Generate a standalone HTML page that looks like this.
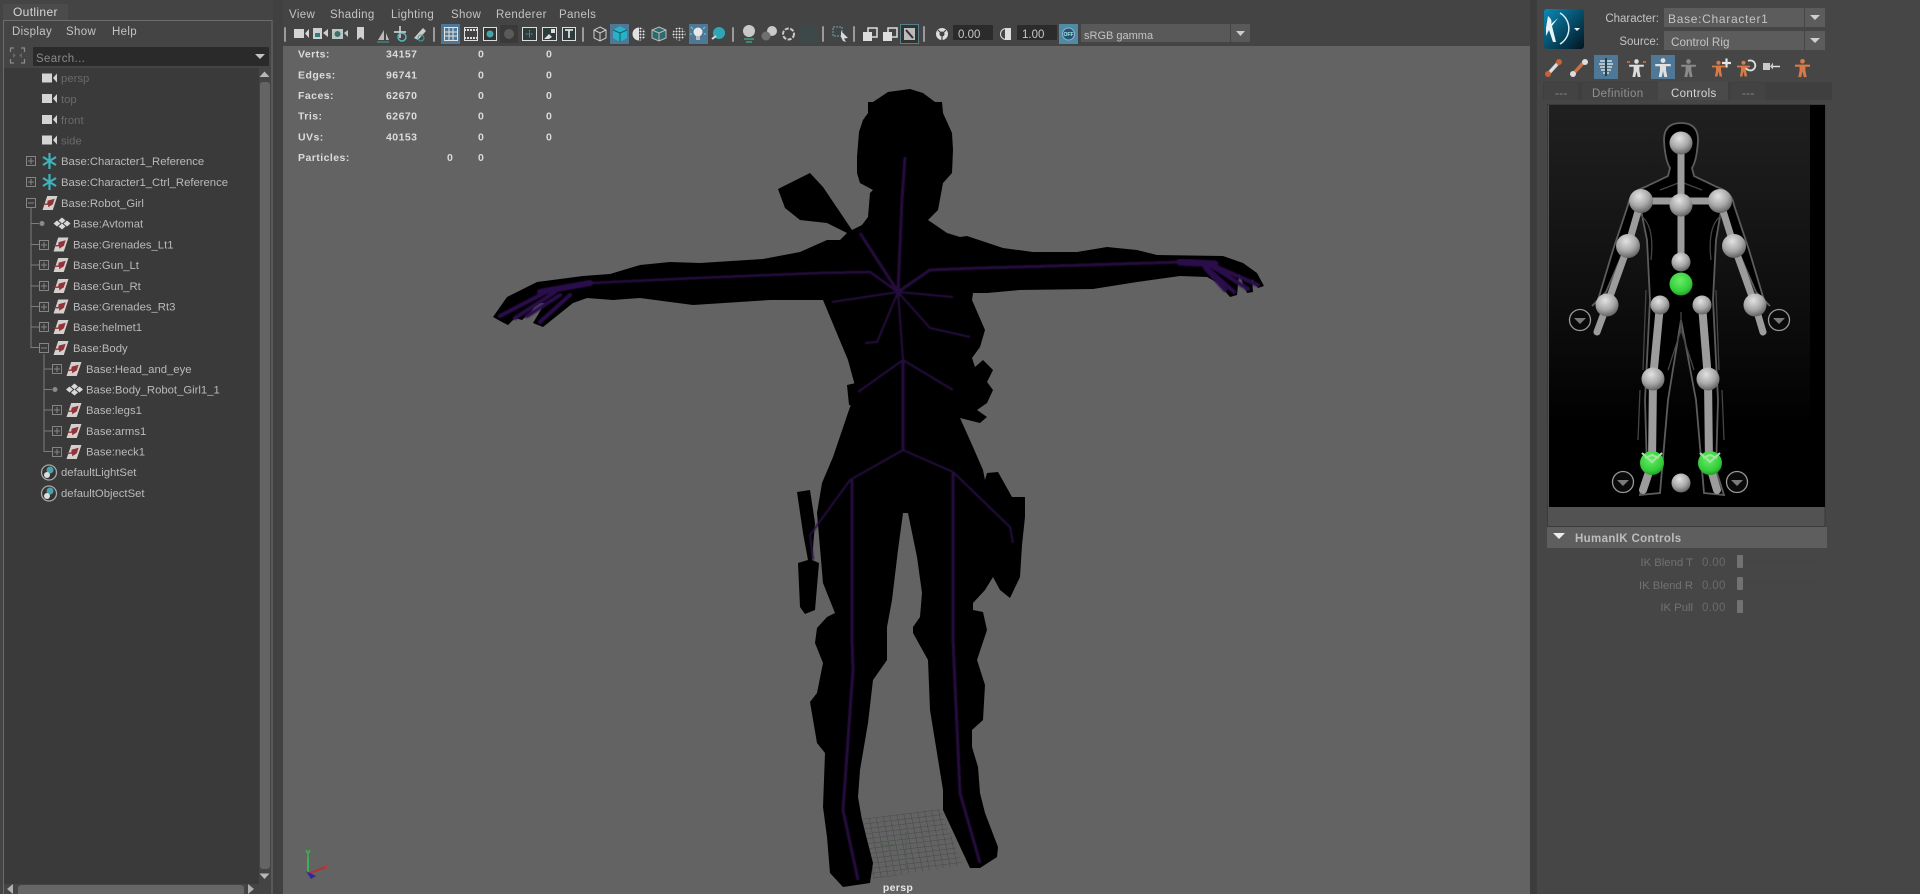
<!DOCTYPE html>
<html><head><meta charset="utf-8"><style>
html,body{margin:0;padding:0;background:#464646;width:1920px;height:894px;overflow:hidden}
svg{display:block;position:absolute;left:0;top:0;filter:blur(.35px)}
text{font-family:"Liberation Sans",sans-serif;font-size:11.5px;fill:#c4c4c4;letter-spacing:.35px}
.d{fill:#6a6a6a;font-size:11.3px;letter-spacing:0}
.s{font-weight:bold;font-size:10.5px;fill:#dcdcdc;letter-spacing:.45px}
.t{fill:#bababa;font-size:11.3px;letter-spacing:0}
</style></head><body>
<svg width="1920" height="894" viewBox="0 0 1920 894" xmlns="http://www.w3.org/2000/svg">
<defs>
<linearGradient id="pg" x1="0" y1="0" x2="0" y2="1"><stop offset="0" stop-color="#202020"/><stop offset=".6" stop-color="#0a0a0a"/><stop offset=".8" stop-color="#000"/><stop offset="1" stop-color="#000"/></linearGradient>
<linearGradient id="lg" x1="0" y1="0" x2="1" y2="1"><stop offset="0" stop-color="#0a8ab8"/><stop offset="1" stop-color="#02141f"/></linearGradient>
<radialGradient id="ball" cx=".42" cy=".3" r=".75"><stop offset="0" stop-color="#e2e2e2"/><stop offset=".55" stop-color="#a8a8a8"/><stop offset="1" stop-color="#585858"/></radialGradient>
<radialGradient id="gball" cx=".45" cy=".35" r=".7"><stop offset="0" stop-color="#66ee66"/><stop offset=".7" stop-color="#34cc3a"/><stop offset="1" stop-color="#1f8f26"/></radialGradient>
<pattern id="grid" width="7" height="5" patternUnits="userSpaceOnUse" patternTransform="matrix(.99 -.12 .2 .98 862 819)"><path d="M0 0H7M0 0V5" stroke="#474747" stroke-width="1" fill="none"/></pattern>
<pattern id="dots" width="3" height="3" patternUnits="userSpaceOnUse"><rect width="3" height="3" fill="#3a3a3a"/><circle cx="1.500" cy="1.500" r="1.050" fill="#e8e8e8"/></pattern>
<filter id="sb" x="-5%" y="-5%" width="110%" height="110%"><feGaussianBlur stdDeviation=".7"/></filter>
<symbol id="mesh" viewBox="0 0 16 15" overflow="visible"><path d="M5 0H16L11 15H0Z" fill="#d4d0ce"/><path d="M-1 8H5L5.500 5L13 3L11 9L6 12V9.500H2Z" fill="#933238"/></symbol>
<symbol id="xf" viewBox="0 0 17 12" overflow="visible"><path d="M8.500 0L12 3L8.500 6L5 3ZM3.500 3L7 6L3.500 9L0 6ZM13.500 3L17 6L13.500 9L10 6ZM8.500 6L12 9L8.500 12L5 9Z" fill="#d8d8d8"/></symbol>
<symbol id="cam" viewBox="0 0 15 9" overflow="visible"><path d="M0 0H10V9H0ZM11 4.500L15 0V9Z" fill="#d4d4d4"/></symbol>
<symbol id="man" viewBox="0 0 18 22" overflow="visible"><circle cx="9" cy="3" r="2.800"/><path d="M0 7H18V9.500H12.500V14L14 22H10.500L9 15L7.500 22H4L5.500 14V9.500H0Z"/></symbol>
</defs>

<!-- base -->
<rect width="1920" height="894" fill="#464646"/>
<rect x="0" y="0" width="1537" height="894" fill="#444"/>
<rect x="273" y="0" width="10" height="894" fill="#414141"/>
<rect x="283" y="46" width="1247" height="848" fill="#636363"/>
<rect x="1530" y="0" width="7" height="894" fill="#3c3c3c"/>

<!-- Outliner -->
<path d="M3 20V4H68V20Z" fill="#4b4b4b"/>
<text x="13" y="16" style="fill:#d6d6d6;font-size:12px">Outliner</text>
<rect x="3.500" y="20.500" width="268.500" height="880" fill="#444" stroke="#6c6c6c"/>
<text x="12" y="35">Display</text><text x="66" y="35">Show</text><text x="112" y="35">Help</text>
<path d="M10 48h4M21 48h4M10 63h4M21 63h4M10.500 48v4M10.500 59v4M24.500 48v4M24.500 59v4" stroke="#8a8a8a" fill="none" stroke-width="1.300"/>
<path d="M13 53l3 2.500-3 2.500ZM22 53l-3 2.500 3 2.500Z" fill="#666"/>
<rect x="33" y="47" width="236" height="19" rx="1" fill="#2a2a2a"/>
<text x="36" y="62" style="fill:#8a8a8a">Search...</text>
<path d="M255 54H265L260 59Z" fill="#c4c4c4"/>
<rect x="4" y="68" width="255" height="816" fill="#3a3a3a"/>
<rect x="259" y="68" width="12" height="816" fill="#444"/>
<rect x="260" y="82" width="10" height="787" rx="3" fill="#646464"/>
<path d="M259.500 77L264.500 71.500L269.500 77Z" fill="#b8b8b8"/>
<path d="M259.500 873.500H269.500L264.500 879Z" fill="#b8b8b8"/>
<path d="M7 889L13 884V894Z" fill="#b0b0b0"/><path d="M248 884L254 889L248 894Z" fill="#b0b0b0"/>
<path d="M18 894V888Q18 885 22 885H240Q244 885 244 888V894Z" fill="#666"/>

<!-- tree lines -->
<path d="M31 208V347.500H39M31 223.500H39M31 244.500H39M31 265H39M31 286H39M31 306.500H39M31 327H39M44 354V451.500H52M44 369H52M44 389.500H52M44 410H52M44 431H52" stroke="#7c7c7c" fill="none"/>
<g fill="none" stroke="#858585">
<rect x="26.500" y="156.500" width="9" height="9"/><rect x="26.500" y="177.500" width="9" height="9"/><rect x="26.500" y="198.500" width="9" height="9"/>
<rect x="39.500" y="240.500" width="9" height="9" fill="#3a3a3a"/><rect x="39.500" y="260.500" width="9" height="9" fill="#3a3a3a"/><rect x="39.500" y="281.500" width="9" height="9" fill="#3a3a3a"/><rect x="39.500" y="302.500" width="9" height="9" fill="#3a3a3a"/><rect x="39.500" y="322.500" width="9" height="9" fill="#3a3a3a"/><rect x="39.500" y="343.500" width="9" height="9" fill="#3a3a3a"/>
<rect x="52.500" y="364.500" width="9" height="9" fill="#3a3a3a"/><rect x="52.500" y="405.500" width="9" height="9" fill="#3a3a3a"/><rect x="52.500" y="426.500" width="9" height="9" fill="#3a3a3a"/><rect x="52.500" y="447.500" width="9" height="9" fill="#3a3a3a"/>
<path d="M28 161h6M31 158v6M28 182h6M31 179v6M28 203h6M41 245h6M44 242v6M41 265h6M44 262v6M41 286h6M44 283v6M41 307h6M44 304v6M41 327h6M44 324v6M41 348h6M54 369h6M57 366v6M54 410h6M57 407v6M54 431h6M57 428v6M54 452h6M57 449v6"/>
</g>
<circle cx="42" cy="223.500" r="2.500" fill="#8a8a8a"/><circle cx="55" cy="389.500" r="2.500" fill="#8a8a8a"/>

<!-- tree icons -->
<use href="#cam" x="42" y="73.500" width="15" height="9"/><use href="#cam" x="42" y="94" width="15" height="9"/><use href="#cam" x="42" y="115" width="15" height="9"/><use href="#cam" x="42" y="135.500" width="15" height="9"/>
<g stroke="#3fb3bc" stroke-width="2.200" fill="none"><path d="M49.500 153V169M43 157L56 165M56 157L43 165M49.500 174V190M43 178L56 186M56 178L43 186"/></g>
<use href="#mesh" x="42" y="196" width="16" height="14"/>
<use href="#xf" x="53.500" y="217.500" width="17" height="12"/>
<use href="#mesh" x="53" y="237.500" width="16" height="14"/><use href="#mesh" x="53" y="258" width="16" height="14"/><use href="#mesh" x="53" y="279" width="16" height="14"/><use href="#mesh" x="53" y="299.500" width="16" height="14"/><use href="#mesh" x="53" y="320" width="16" height="14"/><use href="#mesh" x="53" y="341" width="16" height="14"/>
<use href="#mesh" x="66" y="362" width="16" height="14"/><use href="#xf" x="66" y="383.500" width="17" height="12"/><use href="#mesh" x="66" y="403" width="16" height="14"/><use href="#mesh" x="66" y="424" width="16" height="14"/><use href="#mesh" x="66" y="445" width="16" height="14"/>
<g><circle cx="49" cy="472.500" r="7.500" fill="#333" stroke="#a8a8a8" stroke-width="1.300"/><circle cx="50" cy="470" r="3.500" fill="#4aa3ac"/><circle cx="47" cy="475" r="3" fill="#ddd"/>
<circle cx="49" cy="493.500" r="7.500" fill="#333" stroke="#a8a8a8" stroke-width="1.300"/><circle cx="50" cy="491" r="3.500" fill="#4aa3ac"/><circle cx="47" cy="496" r="3" fill="#ddd"/></g>

<!-- tree text -->
<text x="61" y="82" class="d">persp</text><text x="61" y="103" class="d">top</text><text x="61" y="124" class="d">front</text><text x="61" y="144.500" class="d">side</text>
<g>
<text x="61" y="165" class="t">Base:Character1_Reference</text>
<text x="61" y="186" class="t">Base:Character1_Ctrl_Reference</text>
<text x="61" y="207" class="t">Base:Robot_Girl</text>
<text x="73" y="227.500" class="t">Base:Avtomat</text>
<text x="73" y="248.500" class="t">Base:Grenades_Lt1</text>
<text x="73" y="269" class="t">Base:Gun_Lt</text>
<text x="73" y="290" class="t">Base:Gun_Rt</text>
<text x="73" y="310.500" class="t">Base:Grenades_Rt3</text>
<text x="73" y="331" class="t">Base:helmet1</text>
<text x="73" y="352" class="t">Base:Body</text>
<text x="86" y="373" class="t">Base:Head_and_eye</text>
<text x="86" y="393.500" class="t">Base:Body_Robot_Girl1_1</text>
<text x="86" y="414" class="t">Base:legs1</text>
<text x="86" y="435" class="t">Base:arms1</text>
<text x="86" y="455.500" class="t">Base:neck1</text>
<text x="61" y="476" class="t">defaultLightSet</text>
<text x="61" y="497" class="t">defaultObjectSet</text>
</g>

<!-- Viewport menus -->
<text x="289" y="18">View</text><text x="330" y="18">Shading</text><text x="391" y="18">Lighting</text><text x="451" y="18">Show</text><text x="496" y="18">Renderer</text><text x="559" y="18">Panels</text>

<!-- Toolbar -->
<g stroke="#9a9a9a" stroke-width="2" stroke-linecap="round"><path d="M285 28V41M434 28V41M583 28V41M733 28V41M823 27V41M854 27V41M924 27V41"/></g>
<rect x="441" y="24" width="19" height="20" fill="#4f7896"/><rect x="610" y="24" width="19" height="20" fill="#4f7896"/><rect x="689" y="24" width="19" height="20" fill="#4f7896"/>
<rect x="500" y="25" width="18" height="18" fill="#3a3a3a"/>
<use href="#cam" x="294" y="29" width="15" height="9"/>
<path d="M313 28h9v11h-9zM323 33l5-4v8z" fill="#cfcfcf"/><rect x="315" y="33" width="5" height="4" fill="#2f7d7d"/>
<path d="M332 29h11v10h-11zM344 33l4-3v7z" fill="#b9c7c7"/><circle cx="337.500" cy="34" r="3" fill="#3f6e6e"/>
<path d="M357 27h7v13l-3.500-3-3.500 3z" fill="#d0d0d0"/>
<path d="M378 40L384 30V40ZM386 40V33L389 40Z" fill="#bbb"/><path d="M377 42h12" stroke="#3fa0a0"/>
<path d="M394 32h12M400 26v12" stroke="#ddd" stroke-width="1.500"/><circle cx="402" cy="37" r="4" fill="none" stroke="#58b7bb" stroke-width="1.500"/>
<path d="M414 38L423 28L426 31L418 40Z" fill="#ccc"/><circle cx="421" cy="38" r="3" fill="none" stroke="#3fa0a0"/>
<g fill="none" stroke="#e4e4e4"><rect x="444.500" y="27.500" width="13" height="13"/><path d="M444 32h14M444 36h14M449 27v14M453 27v14"/></g>
<rect x="464.500" y="27.500" width="13" height="13" fill="none" stroke="#ddd"/><path d="M464 30h14M464 38h14" stroke="#ddd" stroke-dasharray="2 1" stroke-width="2"/>
<rect x="483.500" y="27.500" width="13" height="13" fill="#333" stroke="#ddd"/><circle cx="490" cy="34" r="3.500" fill="#3fa7a7"/>
<circle cx="509" cy="34" r="5" fill="#5a5a5a"/>
<rect x="522.500" y="27.500" width="14" height="13" fill="#2e3b3b" stroke="#ddd"/><path d="M526 34h7M529.500 30v8" stroke="#5ab" stroke-dasharray="1.500 1"/>
<rect x="542.500" y="27.500" width="14" height="13" fill="#2e3b3b" stroke="#ddd"/><path d="M544 39l5-5 3 3-3 2zM551 29h4v4h-4z" fill="#ddd"/>
<rect x="562.500" y="27.500" width="13" height="13" fill="#2e3b3b" stroke="#ddd"/><path d="M565 30h8M569 30v8" stroke="#ddd" stroke-width="1.800"/>
<g fill="none" stroke="#cfcfcf"><path d="M600 27L606 30V38L600 41L594 38V30ZM594 30L600 33L606 30M600 33V41"/></g>
<path d="M620 26L627 30V38L620 42L613 38V30Z" fill="#27b3c5"/><path d="M613 30L620 33L627 30M620 33V42" stroke="#0b5f6b" fill="none"/>
<circle cx="639" cy="34" r="6.500" fill="#e2e2e2"/><path d="M639 27.500a6.500 6.500 0 0 1 0 13z" fill="url(#dots)"/>
<path d="M659 27L666 30V38L659 41L652 38V30Z" fill="#2d6a6d" stroke="#bbb"/><path d="M652 30L659 33L666 30M659 33V41" stroke="#bbb" fill="none"/>
<circle cx="679" cy="34" r="6.500" fill="url(#dots)"/>
<circle cx="698" cy="32" r="4.500" fill="#e8e8e8"/><rect x="696" y="36" width="4" height="4" fill="#bbb"/><path d="M691 27l2 2M705 27l-2 2M690 34h2M704 34h2" stroke="#58c0d0" stroke-width="1.500"/>
<circle cx="719" cy="33" r="6" fill="#2fa6b5"/><path d="M712 39l4-3" stroke="#ddd" stroke-width="2"/>
<circle cx="749" cy="31" r="6" fill="#c9c9c9"/><path d="M744 39h10M746 42h6" stroke="#3f9f7f" stroke-width="1.500"/>
<circle cx="772" cy="31" r="5" fill="#c9c9c9"/><circle cx="766" cy="36" r="4.500" fill="#6f6f6f"/>
<circle cx="788.500" cy="34" r="5.500" fill="none" stroke="#c8c8c8" stroke-width="2" stroke-dasharray="4 1.500"/>
<rect x="800" y="25" width="17" height="18" fill="#3d4848"/>
<path d="M833 27h9v9h-9z" fill="none" stroke="#6aa" stroke-dasharray="2 1"/><path d="M841 31L848 38L844 38.500L846 42L843 41L841 37Z" fill="#d8d8d8"/>
<path d="M868 28h9v9h-9z" fill="none" stroke="#ddd" stroke-width="1.500"/><rect x="863" y="32" width="9" height="9" fill="#ddd"/>
<path d="M888 28h9v9h-9z" fill="none" stroke="#ddd" stroke-width="1.500"/><rect x="883" y="32" width="9" height="9" fill="#ddd"/>
<rect x="900.500" y="24.500" width="18" height="19" fill="#333" stroke="#55808a"/><rect x="904" y="28" width="11" height="12" fill="#bbb"/><path d="M906 30L913 38" stroke="#333" stroke-width="2"/>
<circle cx="942" cy="34" r="6" fill="#ddd"/><circle cx="942" cy="34" r="2.500" fill="#444"/><path d="M938 30l4 4M946 30l-4 4M942 40v-6" stroke="#444" stroke-width="1.200"/>
<rect x="953" y="25" width="40" height="15" rx="1" fill="#2b2b2b"/><text x="958" y="38" style="font-size:11.500px;fill:#c8c8c8;letter-spacing:0">0.00</text>
<path d="M1006 28.500a5.500 5.500 0 1 0 0 11z" fill="#444" stroke="#ddd"/><path d="M1005 28H1011V40H1005Z" fill="#ddd"/>
<rect x="1017" y="25" width="40" height="15" rx="1" fill="#2b2b2b"/><text x="1022" y="38" style="font-size:11.500px;fill:#c8c8c8;letter-spacing:0">1.00</text>
<rect x="1059" y="24" width="19" height="20" fill="#4f8ca4"/><circle cx="1068.500" cy="34" r="6" fill="#22586a" stroke="#9ad"/><text x="1063.500" y="36" style="font-size:5px;font-weight:bold;fill:#aee;letter-spacing:0">OFF</text>
<rect x="1081" y="24" width="149" height="18" fill="#595959"/><rect x="1231" y="24" width="19" height="18" fill="#595959"/>
<text x="1084" y="39" style="font-size:11px;letter-spacing:0">sRGB gamma</text>
<path d="M1236 31H1245L1240.500 36Z" fill="#ccc"/>

<!-- Stats -->
<g transform="translate(0 -.5)">
<text x="298" y="58" class="s">Verts:</text><text x="386" y="58" class="s">34157</text><text x="478" y="58" class="s">0</text><text x="546" y="58" class="s">0</text>
<text x="298" y="79" class="s">Edges:</text><text x="386" y="79" class="s">96741</text><text x="478" y="79" class="s">0</text><text x="546" y="79" class="s">0</text>
<text x="298" y="99.500" class="s">Faces:</text><text x="386" y="99.500" class="s">62670</text><text x="478" y="99.500" class="s">0</text><text x="546" y="99.500" class="s">0</text>
<text x="298" y="120" class="s">Tris:</text><text x="386" y="120" class="s">62670</text><text x="478" y="120" class="s">0</text><text x="546" y="120" class="s">0</text>
<text x="298" y="141" class="s">UVs:</text><text x="386" y="141" class="s">40153</text><text x="478" y="141" class="s">0</text><text x="546" y="141" class="s">0</text>
<text x="298" y="161.500" class="s">Particles:</text><text x="447" y="161.500" class="s">0</text><text x="478" y="161.500" class="s">0</text>
</g>

<!-- grid -->
<path d="M862 819L940 809L963 865L873 879Z" fill="url(#grid)"/>
<path d="M880 845h16M906 832V870" stroke="#4d5f4d"/>

<!-- silhouette -->
<path fill="#000" d="M868 102L873 102L888 92L910 89L923 93L935 102L942 102L943 113L952 133L953 150L952 173L943 183L938 210L928 220L947 233L960 237L967 236L1003 248L1033 252L1077 252L1107 247L1137 250L1157 255L1223 256L1243 263L1257 273L1264 286L1258 288L1252 279L1253 292L1247 293L1239 274L1237 295L1230 297L1218 283L1207 277L1180 276L1137 282L1093 289L1020 290L987 293L973 293L972 300L985 330L980 347L972 358L975 367L983 360L993 370L987 382L993 390L987 403L977 410L987 417L980 423L960 418L973 447L983 470L985 480L987 473L998 472L1012 497L1025 497L1025 517L1022 545L1020 577L1010 598L1000 590L993 577L985 590L973 603L973 610L983 612L987 630L977 660L985 685L983 720L972 730L972 747L978 767L980 793L985 813L998 847L997 857L980 868L970 868L943 810L943 790L930 710L928 660L913 633L913 627L920 617L922 593L917 557L908 513L903 513L898 550L892 600L887 627L887 660L873 680L868 723L860 770L858 797L862 820L873 863L870 883L843 887L830 873L827 837L823 807L825 753L817 743L810 702L817 693L823 663L815 643L817 628L827 617L835 613L823 583L817 513L822 483L833 457L850 407L857 393L848 360L823 300L770 300L693 305L640 298L613 300L587 298L573 303L543 327L533 323L545 303L537 303L530 313L522 320L515 318L508 325L502 322L493 317L507 297L537 282L583 276L610 274L640 265L670 262L700 263L763 259L800 252L827 240L840 240L847 233L827 223L800 220L785 208L778 189L810 173L823 187L852 230L862 225L868 217L870 193L873 190L860 183L857 173L857 157L859 132L863 120L868 113Z"/>
<path fill="#000" d="M797 492L810 490L815 523L812 560L819 563L815 610L805 614L800 607L798 563L808 560L803 533Z"/>
<path fill="#000" d="M847 385L856 383L858 400L855 406L849 405Z"/>

<!-- skeleton -->
<g fill="none" stroke="#25103f" stroke-width="2" filter="url(#sb)">
<path stroke-width="3" d="M898 292L902 200L905 157"/>
<path stroke-width="2.500" d="M590 283L697 278L820 273L870 272L898 292"/>
<path stroke-width="3" d="M898 292L860 233M898 292L930 270L980 268L1087 265L1180 262"/>
<path d="M898 292L832 302M898 292L953 297M898 292L903 360M898 292L877 342L865 343M898 292L930 328L970 337"/>
<path stroke-width="3" d="M903 360V450"/>
<path d="M903 360L858 392M903 360L953 390"/>
<path d="M903 450L850 480L810 535L813 560M903 450L953 472L1010 527L1013 543"/>
<path stroke-width="3" d="M852 480V640L853 670L843 810L858 880M953 473V640L960 793L980 863"/>
</g>
<g fill="none" stroke="#2a0f4c" stroke-width="4" stroke-linecap="round" filter="url(#sb)">
<path stroke-width="6" d="M590 283L540 292"/>
<path d="M550 290L500 316M555 292L515 318M560 295L527 316M570 295L540 322"/>
<path stroke-width="7" d="M1180 262L1215 264"/>
<path d="M1210 264L1258 285M1210 265L1248 289M1205 266L1234 292M1205 268L1225 290"/>
</g>

<!-- axis + cam label -->
<path d="M308 873V857" stroke="#3fae55" stroke-width="2"/>
<path d="M306 850l2 4 2-4M308 854v4" stroke="#3fae55" fill="none" stroke-width="1.500"/>
<path d="M310 873L326 867" stroke="#a8383c" stroke-width="2.500"/><path d="M323 866l5-2-1 5z" fill="#b53c40"/>
<path d="M306 871L316 876L311 879Z" fill="#2a2a9a"/>
<text x="898" y="891" text-anchor="middle" style="font-weight:bold;font-size:10.500px;fill:#e6e6e6">persp</text>

<!-- Right panel -->
<rect x="1544" y="9" width="40" height="40" rx="3" fill="url(#lg)"/>
<path d="M1548 16Q1553 20 1551 24L1558 18L1552 26L1556 42H1553L1549 30L1546 36V28Z" fill="#e8f4f8"/>
<path d="M1552 13A18 18 0 0 1 1552 44" stroke="#d8eef5" stroke-width="1.500" fill="none" transform="translate(8 0)"/>
<path d="M1574 28H1580L1577 31Z" fill="#e8f4f8"/>
<text x="1659" y="22" text-anchor="end" style="font-size:11.500px;letter-spacing:0">Character:</text>
<text x="1659" y="45" text-anchor="end" style="font-size:11.500px;letter-spacing:0">Source:</text>
<rect x="1664" y="8" width="140" height="19" fill="#5c5c5c"/><rect x="1805" y="8" width="20" height="19" fill="#5c5c5c"/>
<rect x="1664" y="31" width="140" height="19" fill="#5c5c5c"/><rect x="1805" y="31" width="20" height="19" fill="#5c5c5c"/>
<text x="1668" y="23" style="font-size:12px;letter-spacing:.7px">Base:Character1</text>
<text x="1671" y="46" style="font-size:11.700px;letter-spacing:0">Control Rig</text>
<path d="M1810 15H1820L1815 20ZM1810 38H1820L1815 43Z" fill="#cfcfcf"/>

<rect x="1594" y="55" width="24" height="24" fill="#4f7896"/><rect x="1651" y="55" width="24" height="24" fill="#4f7896"/>
<path d="M1549 73L1559 62" stroke="#ddd" stroke-width="3.500"/><circle cx="1548" cy="74" r="3" fill="#c8603a"/><circle cx="1559" cy="62" r="3" fill="#c8603a"/>
<path d="M1574 73L1584 62" stroke="#c8704a" stroke-width="3.500"/><circle cx="1573" cy="74" r="3" fill="#ddd"/><circle cx="1585" cy="62" r="3" fill="#ddd"/>
<g stroke="#d8d8d8" stroke-width="1.500"><path d="M1600 61h12M1599 64h14M1600 67h12M1601 70h10M1603 73h6"/></g><path d="M1606 58V76" stroke="#1f4050" stroke-width="2"/>
<use href="#man" x="1629" y="59" width="15" height="18" fill="#dcdcdc"/>
<path d="M1627 62h3M1643 62h3" stroke="#c8603a" stroke-width="2"/>
<use href="#man" x="1655" y="58" width="16" height="19" fill="#e0e0e0"/>
<use href="#man" x="1681" y="59" width="15" height="18" fill="#8a8a8a"/>
<use href="#man" x="1712" y="60" width="13" height="17" fill="#d87a45"/><path d="M1722 63h9M1726.500 58.500v9" stroke="#e4e4e4" stroke-width="2.200"/>
<use href="#man" x="1737" y="60" width="13" height="17" fill="#d87a45"/><path d="M1748 61a5 5 0 1 1-2 7" fill="none" stroke="#ddd" stroke-width="1.800"/>
<path d="M1763 63h7v7h-7zM1770 66.500l3-4v7z" fill="#c8c8c8"/><path d="M1773 66.500h7" stroke="#ddd" stroke-width="1.500"/>
<use href="#man" x="1795" y="58" width="15" height="20" fill="#d87a45"/>

<rect x="1543" y="82" width="289" height="18" fill="#3f3f3f"/>
<rect x="1544" y="83" width="34" height="17" fill="#434343"/><rect x="1582" y="83" width="76" height="17" fill="#434343"/><rect x="1658" y="82" width="70" height="18" fill="#4a4a4a"/><rect x="1731" y="83" width="34" height="17" fill="#434343"/>
<text x="1555" y="97" style="fill:#8a8a8a">---</text><text x="1592" y="97" style="fill:#909090">Definition</text><text x="1671" y="97" style="fill:#d6d6d6">Controls</text><text x="1742" y="97" style="fill:#8a8a8a">---</text>

<rect x="1547.500" y="104.500" width="277.500" height="422" fill="#525252" stroke="#3a3a3a"/>
<rect x="1549" y="105" width="276" height="402" fill="url(#pg)"/>
<rect x="1810" y="105" width="15" height="402" fill="#000"/>
<!-- body figure -->
<path d="M1681 123Q1664 123 1664 140Q1665 160 1670 168L1668 176L1645 187Q1630 192 1628 205L1613 250L1598 300L1592 306L1606 292L1632 232L1640 205L1647 240L1650 300L1645 400L1647 470L1640 495L1660 493L1668 400L1681 320L1696 400L1704 493L1724 495L1716 470L1718 400L1713 300L1716 240L1722 205L1730 232L1756 292L1770 306L1764 300L1749 250L1734 205Q1732 192 1717 187L1694 176L1692 168Q1697 160 1698 140Q1698 123 1681 123Z" fill="#000" stroke="#5c5c5c" stroke-width="1.800"/>
<path d="M1640 215Q1655 225 1651 260M1722 215Q1707 225 1711 260M1660 190L1681 182L1702 190M1646 290L1643 370M1716 290L1719 370M1681 312V330L1668 370M1681 330L1694 370M1640 390L1638 440M1722 390L1724 440" stroke="#454545" stroke-width="1.300" fill="none"/>
<!-- bones -->
<g stroke="#9c9c9c" fill="none" stroke-linecap="round">
<path stroke-width="7" d="M1681 143V205M1681 205V262M1641 201L1720 201M1641 201L1628 246M1720 201L1734 246"/>
<path stroke-width="7" d="M1628 246L1607 305L1597 332M1734 246L1755 305L1763 332"/>
<path stroke-width="8" d="M1660 305L1653 379L1652 463L1643 490M1702 305L1708 379L1709 463L1717 490"/>
</g>
<g fill="url(#ball)">
<circle cx="1681" cy="143" r="11.500"/><circle cx="1681" cy="205" r="11.500"/><circle cx="1641" cy="201" r="12"/><circle cx="1720" cy="201" r="12"/>
<circle cx="1628" cy="246" r="12"/><circle cx="1734" cy="246" r="12"/><circle cx="1607" cy="305" r="11.500"/><circle cx="1755" cy="305" r="11.500"/>
<circle cx="1681" cy="262" r="9.500"/><circle cx="1660" cy="305" r="9.500"/><circle cx="1702" cy="305" r="9.500"/>
<circle cx="1653" cy="379" r="11.500"/><circle cx="1708" cy="379" r="11.500"/><circle cx="1681" cy="483" r="9.500"/>
</g>
<circle cx="1681" cy="284" r="11.500" fill="url(#gball)"/>
<circle cx="1652" cy="463" r="12" fill="url(#gball)"/><circle cx="1710" cy="463" r="12" fill="url(#gball)"/>
<path d="M1642 453L1652 462L1662 453M1645 458L1652 455L1659 458M1700 453L1710 462L1720 453M1703 458L1710 455L1717 458" stroke="#9fe69f" stroke-width="2" fill="none"/>
<g fill="#0a0a0a" stroke="#9a9a9a" stroke-width="1.300"><circle cx="1580" cy="320" r="10.500"/><circle cx="1779" cy="320" r="10.500"/><circle cx="1623" cy="482" r="10.500"/><circle cx="1737" cy="482" r="10.500"/></g>
<path d="M1574 318H1586L1580 324ZM1773 318H1785L1779 324ZM1617 480H1629L1623 486ZM1731 480H1743L1737 486Z" fill="#7a7a7a"/>

<!-- HumanIK -->
<rect x="1547" y="527" width="280" height="21" fill="#5e5e5e"/>
<path d="M1553 533H1565L1559 539Z" fill="#eee"/>
<text x="1575" y="542" style="font-weight:bold;font-size:11.500px;fill:#bdbdbd">HumanIK Controls</text>
<text x="1693" y="566" text-anchor="end" style="fill:#727272;font-size:11.300px;letter-spacing:0">IK Blend T</text>
<text x="1693" y="589" text-anchor="end" style="fill:#727272;font-size:11.300px;letter-spacing:0">IK Blend R</text>
<text x="1693" y="611" text-anchor="end" style="fill:#727272;font-size:11.300px;letter-spacing:0">IK Pull</text>
<text x="1702" y="566" style="fill:#6a6a6a">0.00</text><text x="1702" y="589" style="fill:#6a6a6a">0.00</text><text x="1702" y="611" style="fill:#6a6a6a">0.00</text>
<path d="M1743 560.500H1820M1743 583.500H1820M1743 605.500H1820" stroke="#444"/>
<rect x="1737" y="555" width="6" height="13" rx="1" fill="#727272"/><rect x="1737" y="577" width="6" height="13" rx="1" fill="#727272"/><rect x="1737" y="600" width="6" height="13" rx="1" fill="#727272"/>
</svg>
</body></html>
